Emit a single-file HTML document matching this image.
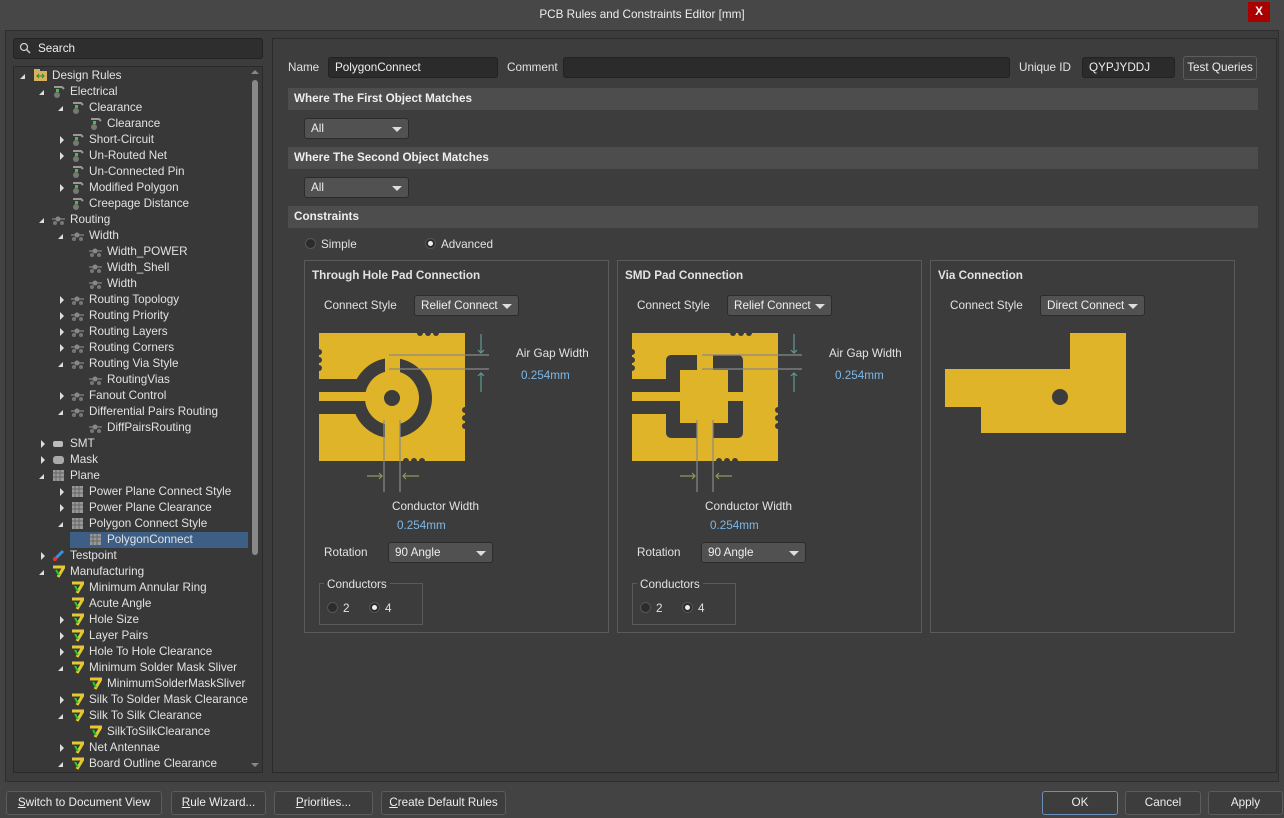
<!DOCTYPE html>
<html><head><meta charset="utf-8"><style>
*{box-sizing:border-box;margin:0;padding:0}
body{width:1284px;height:818px;background:#434343;font:11.7px "Liberation Sans",sans-serif;color:#e2e2e2;position:relative;overflow:hidden}
.a{position:absolute;white-space:nowrap}
.title{left:0;top:0;width:1284px;height:30px;background:#474747;text-align:center;line-height:30px;color:#eee}
.close{left:1248px;top:2px;width:22px;height:20px;background:#a00;color:#fff;font-weight:bold;text-align:center;line-height:20px}
.inp{background:#2b2b2b;border:1px solid #222;border-radius:3px;height:21px;line-height:19px;padding-left:6px;color:#eee}
.btn{background:#3d3d3d;border:1px solid #5c5c5c;border-radius:3px;text-align:center;color:#eee;height:24px;line-height:22px}
.sec{left:288px;width:970px;height:22px;background:#4d4d4d;font-weight:bold;line-height:22px;padding-left:6px;color:#eee}
.dd{background:#515151;border:1px solid #2c2c2c;border-radius:3px;height:21px;line-height:19px;padding-left:6px;color:#eee}
.dd:after{content:"";position:absolute;right:6px;top:8px;border-left:5px solid transparent;border-right:5px solid transparent;border-top:5px solid #ddd}
.panel{top:260px;height:373px;border:1px solid #5a5a5a;background:#3c3c3c}
.rad{width:11px;height:11px;border-radius:50%;background:#2c2c2c;border:1px solid #555}
.rad.on:after{content:"";position:absolute;left:2px;top:2px;width:5px;height:5px;border-radius:50%;background:#eee}
.blue{color:#7ab8ea}
.row{height:16px;line-height:16px}
.tri{width:0;height:0}
.col{border-top:4px solid transparent;border-bottom:4px solid transparent;border-left:4px solid #ddd}
.exp{border-left:5px solid transparent;border-bottom:5px solid #ddd}
.ic{width:13px;height:13px}
</style></head><body>
<div class="a title">PCB Rules and Constraints Editor [mm]</div>
<div class="a close">X</div>
<div class="a" style="left:5px;top:30px;width:1274px;height:752px;background:#3c3c3c;border:1px solid #2e2e2e"></div>
<div class="a inp" style="left:13px;top:38px;width:250px;height:21px;background:#2e2e2e;padding-left:24px;line-height:19px">Search</div>
<svg class="a" style="left:19px;top:42px" width="12" height="12"><circle cx="5" cy="5" r="3.5" fill="none" stroke="#ccc" stroke-width="1.3"/><path d="M7.5 7.5 L11 11" stroke="#ccc" stroke-width="1.5"/></svg>
<div class="a" style="left:13px;top:66px;width:250px;height:707px;background:#383838;border:1px solid #2a2a2a"></div>
<div class="a" style="left:272px;top:38px;width:1005px;height:735px;background:#3d3d3d;border:1px solid #2a2a2a"></div>
<div class="a" style="left:252px;top:80px;width:6px;height:475px;background:#888;border-radius:3px"></div>
<div class="a" style="left:251px;top:70px;border-left:4px solid transparent;border-right:4px solid transparent;border-bottom:4px solid #888"></div>
<div class="a" style="left:251px;top:763px;border-left:4px solid transparent;border-right:4px solid transparent;border-top:4px solid #888"></div>
<div class="a" style="left:70px;top:532px;width:178px;height:16px;background:#3d5f86"></div>
<div id="tree"></div>
<script>
var rows=[["Design Rules",0,"e","f"],["Electrical",1,"e","c"],["Clearance",2,"e","c"],["Clearance",3,"","c"],["Short-Circuit",2,"c","c"],["Un-Routed Net",2,"c","c"],["Un-Connected Pin",2,"","c"],["Modified Polygon",2,"c","c"],["Creepage Distance",2,"","c"],["Routing",1,"e","r"],["Width",2,"e","r"],["Width_POWER",3,"","r"],["Width_Shell",3,"","r"],["Width",3,"","r"],["Routing Topology",2,"c","r"],["Routing Priority",2,"c","r"],["Routing Layers",2,"c","r"],["Routing Corners",2,"c","r"],["Routing Via Style",2,"e","r"],["RoutingVias",3,"","r"],["Fanout Control",2,"c","r"],["Differential Pairs Routing",2,"e","r"],["DiffPairsRouting",3,"","r"],["SMT",1,"c","s"],["Mask",1,"c","m"],["Plane",1,"e","p"],["Power Plane Connect Style",2,"c","p"],["Power Plane Clearance",2,"c","p"],["Polygon Connect Style",2,"e","p"],["PolygonConnect",3,"","p"],["Testpoint",1,"c","t"],["Manufacturing",1,"e","y"],["Minimum Annular Ring",2,"","y"],["Acute Angle",2,"","y"],["Hole Size",2,"c","y"],["Layer Pairs",2,"c","y"],["Hole To Hole Clearance",2,"c","y"],["Minimum Solder Mask Sliver",2,"e","y"],["MinimumSolderMaskSliver",3,"","y"],["Silk To Solder Mask Clearance",2,"c","y"],["Silk To Silk Clearance",2,"e","y"],["SilkToSilkClearance",3,"","y"],["Net Antennae",2,"c","y"],["Board Outline Clearance",2,"e","y"]];
var tx=[52,70,89,107],h="";
var icons={f:'<rect x="0" y="2" width="13" height="10" fill="#d8b060"/><rect x="0" y="0" width="6" height="3" fill="#d8b060"/><path d="M3 7h7M5 5l-2 2 2 2M8 5l2 2-2 2" stroke="#2a8a2a" fill="none"/>',
c:'<path d="M2 2h8l2 2" stroke="#999" stroke-width="2" fill="none"/><circle cx="5" cy="10" r="3" fill="#777"/><rect x="4" y="4" width="3" height="3" fill="#3c3"/>',
r:'<path d="M0 6h13" stroke="#999"/><circle cx="6" cy="6" r="2.5" fill="#888"/><circle cx="3" cy="10" r="2" fill="#777"/><circle cx="10" cy="10" r="2" fill="#777"/>',
s:'<rect x="1" y="4" width="10" height="6" rx="2" fill="#bbb"/>',
m:'<rect x="1" y="3" width="11" height="8" rx="3" fill="#aaa"/>',
p:'<rect x="1" y="1" width="11" height="11" fill="#999"/><path d="M1 4h11M1 8h11M4 1v11M8 1v11" stroke="#666"/>',
t:'<path d="M2 11L11 2" stroke="#3a8fe0" stroke-width="3"/><circle cx="3" cy="10" r="2" fill="#e33"/>',
y:'<path d="M1 2h11L6 12" stroke="#e8c830" stroke-width="3" fill="none"/><path d="M4 5l3 5" stroke="#2c2" stroke-width="2"/>'};
rows.forEach(function(r,i){var y=68+i*16,x=tx[r[1]];
 if(r[2]=="e")h+='<div class="a tri exp" style="left:'+(x-31+ (r[1]==0?-1:0))+'px;top:'+(y+6)+'px"></div>';
 if(r[2]=="c")h+='<div class="a tri col" style="left:'+(x-29)+'px;top:'+(y+4)+'px"></div>';
 h+='<svg class="a ic" style="left:'+(x-18)+'px;top:'+(y+1)+'px" viewBox="0 0 13 13">'+icons[r[3]]+'</svg>';
 h+='<div class="a row" style="left:'+x+'px;top:'+y+'px">'+r[0]+'</div>';});
document.getElementById('tree').innerHTML=h;
</script>
<div class="a" style="left:288px;top:61px">Name</div>
<div class="a inp" style="left:328px;top:57px;width:170px">PolygonConnect</div>
<div class="a" style="left:507px;top:61px">Comment</div>
<div class="a inp" style="left:563px;top:57px;width:447px"></div>
<div class="a" style="left:1019px;top:61px">Unique ID</div>
<div class="a inp" style="left:1082px;top:57px;width:93px">QYPJYDDJ</div>
<div class="a btn" style="left:1183px;top:56px;width:74px">Test Queries</div>
<div class="a sec" style="top:88px">Where The First Object Matches</div>
<div class="a dd" style="left:304px;top:118px;width:105px">All</div>
<div class="a sec" style="top:147px">Where The Second Object Matches</div>
<div class="a dd" style="left:304px;top:177px;width:105px">All</div>
<div class="a sec" style="top:206px">Constraints</div>
<div class="a rad" style="left:305px;top:238px"></div><div class="a" style="left:321px;top:238px">Simple</div>
<div class="a rad on" style="left:425px;top:238px"></div><div class="a" style="left:441px;top:238px">Advanced</div>
<div class="a panel" style="left:304px;width:305px"></div>
<div class="a panel" style="left:617px;width:305px"></div>
<div class="a panel" style="left:930px;width:305px"></div>
<div class="a" style="left:312px;top:269px;font-weight:bold">Through Hole Pad Connection</div>
<div class="a" style="left:625px;top:269px;font-weight:bold">SMD Pad Connection</div>
<div class="a" style="left:938px;top:269px;font-weight:bold">Via Connection</div>
<div class="a" style="left:324px;top:299px">Connect Style</div>
<div class="a dd" style="left:414px;top:295px;width:105px">Relief Connect</div>
<div class="a" style="left:637px;top:299px">Connect Style</div>
<div class="a dd" style="left:727px;top:295px;width:105px">Relief Connect</div>
<div class="a" style="left:950px;top:299px">Connect Style</div>
<div class="a dd" style="left:1040px;top:295px;width:105px">Direct Connect</div>
<div class="a" style="left:516px;top:347px">Air Gap Width</div><div class="a blue" style="left:521px;top:369px">0.254mm</div>
<div class="a" style="left:829px;top:347px">Air Gap Width</div><div class="a blue" style="left:835px;top:369px">0.254mm</div>
<div class="a" style="left:392px;top:500px">Conductor Width</div><div class="a blue" style="left:397px;top:519px">0.254mm</div>
<div class="a" style="left:705px;top:500px">Conductor Width</div><div class="a blue" style="left:710px;top:519px">0.254mm</div>
<div class="a" style="left:324px;top:546px">Rotation</div><div class="a dd" style="top:542px;width:105px;left:388px">90 Angle</div>
<div class="a" style="left:637px;top:546px">Rotation</div><div class="a dd" style="left:701px;top:542px;width:105px">90 Angle</div>
<div class="a" style="left:319px;top:583px;width:104px;height:42px;border:1px solid #5a5a5a"></div>
<div class="a" style="left:324px;top:578px;background:#3c3c3c;padding:0 3px">Conductors</div>
<div class="a rad" style="left:327px;top:602px"></div><div class="a" style="left:343px;top:602px">2</div>
<div class="a rad on" style="left:369px;top:602px"></div><div class="a" style="left:385px;top:602px">4</div>
<div class="a" style="left:632px;top:583px;width:104px;height:42px;border:1px solid #5a5a5a"></div>
<div class="a" style="left:637px;top:578px;background:#3c3c3c;padding:0 3px">Conductors</div>
<div class="a rad" style="left:640px;top:602px"></div><div class="a" style="left:656px;top:602px">2</div>
<div class="a rad on" style="left:682px;top:602px"></div><div class="a" style="left:698px;top:602px">4</div>
<svg class="a" style="left:0;top:0" width="1284" height="818">
<g fill="#e0b428">
<rect x="319" y="333" width="146" height="128"/>
<rect x="632" y="333" width="146" height="128"/>
<path d="M945 369H1070V333H1126V433H981V407H945Z"/>
</g>
<g fill="#3c3c3c">
<rect x="319" y="379" width="45" height="35"/>
<circle cx="392" cy="398" r="40"/>
<circle cx="1060" cy="397" r="8"/>
<rect x="666" y="355" width="77" height="83" rx="5"/>
<rect x="632" y="379" width="40" height="35"/>
<circle cx="420" cy="333" r="3"/><circle cx="428" cy="333" r="3"/><circle cx="436" cy="333" r="3"/>
<circle cx="406" cy="461" r="3"/><circle cx="414" cy="461" r="3"/><circle cx="422" cy="461" r="3"/>
<circle cx="319" cy="352" r="3"/><circle cx="319" cy="360" r="3"/><circle cx="319" cy="368" r="3"/>
<circle cx="465" cy="410" r="3"/><circle cx="465" cy="418" r="3"/><circle cx="465" cy="426" r="3"/>
<circle cx="733" cy="333" r="3"/><circle cx="741" cy="333" r="3"/><circle cx="749" cy="333" r="3"/>
<circle cx="719" cy="461" r="3"/><circle cx="727" cy="461" r="3"/><circle cx="735" cy="461" r="3"/>
<circle cx="632" cy="352" r="3"/><circle cx="632" cy="360" r="3"/><circle cx="632" cy="368" r="3"/>
<circle cx="778" cy="410" r="3"/><circle cx="778" cy="418" r="3"/><circle cx="778" cy="426" r="3"/>
</g>
<g fill="#e0b428">
<circle cx="392" cy="398" r="27"/>
<rect x="319" y="392" width="50" height="9"/>
<rect x="385" y="355" width="15" height="20"/>
<rect x="385" y="420" width="15" height="41"/>
<rect x="680" y="370" width="48" height="53"/>
<rect x="632" y="392" width="50" height="9"/>
<rect x="697" y="355" width="16" height="16"/>
<rect x="697" y="422" width="16" height="39"/>
<rect x="727" y="392" width="17" height="9"/>
</g>
<circle cx="392" cy="398" r="8" fill="#3c3c3c"/>
<g stroke="#888" stroke-width="1.2" fill="none">
<path d="M389 355H489M389 369H489M384 420V492M400 420V492"/>
<path d="M702 355H802M702 369H802M697 420V492M713 420V492"/>
</g>
<g stroke="#5f9a94" stroke-width="1.2" fill="none">
<path d="M481 334V353M478 350l3 3 3-3M481 373V392M478 376l3-3 3 3"/>
<path d="M794 334V353M791 350l3 3 3-3M794 373V392M791 376l3-3 3 3"/>
</g>
<g stroke="#8a9a60" stroke-width="1.2" fill="none">
<path d="M367 476H382M379 473l3 3-3 3M403 476H419M406 473l-3 3 3 3"/>
<path d="M680 476H695M692 473l3 3-3 3M716 476H732M719 473l-3 3 3 3"/>
</g>
</svg>
<div class="a btn" style="left:6px;top:791px;width:156px"><u>S</u>witch to Document View</div>
<div class="a btn" style="left:171px;top:791px;width:95px"><u>R</u>ule Wizard...</div>
<div class="a btn" style="left:274px;top:791px;width:99px"><u>P</u>riorities...</div>
<div class="a btn" style="left:381px;top:791px;width:125px"><u>C</u>reate Default Rules</div>
<div class="a btn" style="left:1042px;top:791px;width:76px;border-color:#6a8fb8">OK</div>
<div class="a btn" style="left:1125px;top:791px;width:76px">Cancel</div>
<div class="a btn" style="left:1208px;top:791px;width:75px">Apply</div>
</body></html>
